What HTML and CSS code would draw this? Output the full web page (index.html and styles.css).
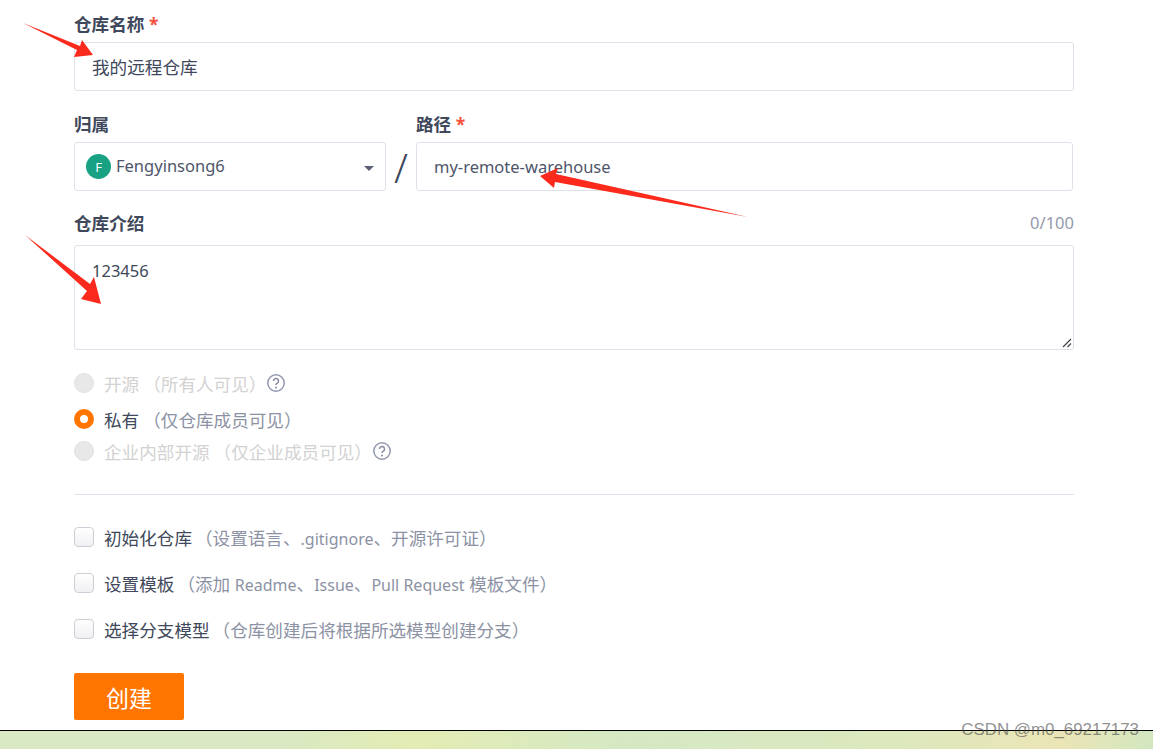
FILE: index.html
```html
<!DOCTYPE html>
<html lang="zh-CN">
<head>
    <meta charset="UTF-8">
    <title>新建仓库</title>
    <link rel="stylesheet" href="styles.css">
</head>
<body>
    <form class="form">
        <div class="field field-name">
            <label class="label">仓库名称 <span class="req">*</span></label>
            <div class="input">我的远程仓库</div>
        </div>

        <div class="owner-row">
            <div class="owner">
                <label class="label">归属</label>
                <div class="input select">
                    <span class="avatar">F</span>
                    <span class="owner-name en">Fengyinsong6</span>
                    <span class="caret"></span>
                </div>
            </div>
            <div class="slash">/</div>
            <div class="path">
                <label class="label">路径 <span class="req">*</span></label>
                <div class="input en">my-remote-warehouse</div>
            </div>
        </div>

        <div class="field field-desc">
            <div class="label-row">
                <label class="label">仓库介绍</label>
                <span class="count en">0/100</span>
            </div>
            <div class="textarea en">
                123456
                <svg class="grip" width="10" height="10" viewBox="0 0 10 10">
                    <path d="M1 9L9 1M5.500 9L9 5.500" stroke="#444" stroke-width="1.200" fill="none"/>
                </svg>
            </div>
        </div>

        <div class="radios">
            <div class="radio-row disabled row-open">
                <span class="radio"></span>
                <span class="opt">开源</span>
                <span class="hint">（所有人可见）</span>
                <svg class="help" width="20" height="20" viewBox="0 0 20 20">
                    <circle cx="10" cy="10" r="8.200" fill="none" stroke="#9499b0" stroke-width="1.500"/>
                    <path d="M7.500 8a2.500 2.500 0 1 1 3.800 2.100c-.9.5-1.300 1-1.300 1.900" fill="none" stroke="#868ba3" stroke-width="1.500"/>
                    <circle cx="10" cy="14.500" r="1" fill="#868ba3"/>
                </svg>
            </div>
            <div class="radio-row row-private">
                <span class="radio checked"></span>
                <span class="opt">私有</span>
                <span class="hint">（仅仓库成员可见）</span>
            </div>
            <div class="radio-row disabled row-internal">
                <span class="radio"></span>
                <span class="opt">企业内部开源</span>
                <span class="hint">（仅企业成员可见）</span>
                <svg class="help" width="20" height="20" viewBox="0 0 20 20">
                    <circle cx="10" cy="10" r="8.200" fill="none" stroke="#9499b0" stroke-width="1.500"/>
                    <path d="M7.500 8a2.500 2.500 0 1 1 3.800 2.100c-.9.5-1.300 1-1.300 1.900" fill="none" stroke="#868ba3" stroke-width="1.500"/>
                    <circle cx="10" cy="14.500" r="1" fill="#868ba3"/>
                </svg>
            </div>
        </div>

        <div class="divider"></div>

        <div class="checks">
            <div class="check-row">
                <span class="checkbox"></span>
                <span class="opt">初始化仓库</span>
                <span class="hint">（设置语言、<span class="en">.gitignore</span>、开源许可证）</span>
            </div>
            <div class="check-row">
                <span class="checkbox"></span>
                <span class="opt">设置模板</span>
                <span class="hint">（添加 <span class="en">Readme</span>、<span class="en">Issue</span>、<span class="en">Pull Request</span> 模板文件）</span>
            </div>
            <div class="check-row">
                <span class="checkbox"></span>
                <span class="opt">选择分支模型</span>
                <span class="hint">（仓库创建后将根据所选模型创建分支）</span>
            </div>
        </div>

        <div class="submit">创建</div>
    </form>

    <div class="strip"></div>
    <div class="watermark">CSDN @m0_69217173</div>

    <!-- red arrows drawn over the screenshot -->
    <svg class="arrows" width="1153" height="749" viewBox="0 0 1153 749">
        <polygon points="23,23 80,46 82,40 93,55 74,57 77,50" fill="#fb2a1c"/>
        <polygon points="748,217 556,174 558,168 540,176 554,188 555,182" fill="#fb2a1c"/>
        <polygon points="25,235 90,284 94,277 101,304 81,299 87,291" fill="#fb2a1c"/>
    </svg>
</body>
</html>
```

FILE: styles.css
```css
* {
    box-sizing: border-box;
}
html, body {
    margin: 0;
    height: 749px;
    overflow: hidden;
    background: #fff;
}
body {
    position: relative;
    font-family: "Noto Sans", "Noto Sans CJK SC", sans-serif;
    font-size: 17.6px;
    color: #40485b;
}
.en {
    font-size: 16.5px;
}
.form {
    width: 1000px;
    height: 730px;
    margin-left: 74px;
    padding-top: 13px;
}
.label {
    display: block;
    height: 24px;
    line-height: 22px;
    font-size: 17.6px;
    font-weight: 700;
    color: #40485b;
}
.req {
    color: #f4513f;
}
.field-name {
    height: 99px;
}
.field-name .label {
    height: 29px;
}
.input {
    display: flex;
    align-items: center;
    height: 49px;
    padding: 0 17px;
    border: 1px solid #dfe1ea;
    border-radius: 3px;
    color: #40485b;
    background: #fff;
}
.input.en {
    color: #4e556a;
}
.owner-row {
    display: flex;
    height: 100px;
    padding-top: 1px;
}
.owner {
    width: 312px;
}
.owner-row .label {
    height: 29px;
}
.select {
    padding: 0 11px 0 11px;
}
.avatar {
    display: flex;
    align-items: center;
    justify-content: center;
    width: 25px;
    height: 25px;
    border-radius: 50%;
    background: #19a184;
    color: #fff;
    font-size: 13px;
    flex-shrink: 0;
}
.owner-name {
    flex: 1;
    margin-left: 5px;
    margin-top: -3px;
    color: #4e556a;
}
.caret {
    width: 0;
    height: 0;
    margin-top: 3px;
    border-left: 5px solid transparent;
    border-right: 5px solid transparent;
    border-top: 5px solid #5a6073;
}
.slash {
    width: 30px;
    padding-top: 28px;
    text-align: center;
    font-size: 40px;
    line-height: 54px;
    font-weight: 300;
    color: #40485b;
}
.path {
    width: 657px;
}
.field-desc {
    height: 158px;
}
.label-row {
    display: flex;
    justify-content: space-between;
    height: 33px;
}
.count {
    line-height: 22px;
    color: #9499ab;
}
.textarea {
    position: relative;
    height: 105px;
    padding: 13px 17px;
    border: 1px solid #dfe1ea;
    border-radius: 3px;
    line-height: 24px;
}
.grip {
    position: absolute;
    right: 1px;
    bottom: 1px;
}
.radio-row, .check-row {
    display: flex;
    align-items: center;
}
.radios {
    height: 124px;
}
.row-open {
    height: 26px;
    margin-bottom: 10px;
}
.row-private {
    height: 26px;
    margin-bottom: 6px;
}
.row-internal {
    height: 26px;
}
.radio {
    width: 20px;
    height: 20px;
    margin-right: 10px;
    border-radius: 50%;
    background: #e8e8e8;
    border: 1px solid #e0e0e0;
}
.radio.checked {
    background: #fff;
    border: 6px solid #ff7500;
}
.opt {
    color: #40485b;
}
.hint {
    margin-left: 4px;
    color: #8c92a4;
}
.check-row .hint {
    margin-left: 3px;
}
.check-row .hint .en {
    font-size: 16px;
}
.disabled .opt, .disabled .hint {
    color: #d2d2d2;
}
.divider {
    height: 1px;
    background: #dfe3ec;
    margin-bottom: 29px;
}
.check-row {
    height: 26px;
    margin-bottom: 20px;
}
.checkbox {
    width: 20px;
    height: 20px;
    margin-right: 10px;
    border: 1px solid #ccced6;
    border-radius: 4px;
    background: linear-gradient(#fff, #f0f0f3);
}
.submit {
    display: flex;
    align-items: center;
    justify-content: center;
    width: 110px;
    height: 47px;
    margin-top: 31px;
    border-radius: 2px;
    background: #ff7500;
    color: #fff;
    font-size: 23px;
}
.strip {
    height: 19px;
    border-top: 1px solid #000;
    background: linear-gradient(90deg, #d9e9c3 0%, #dae9c2 25%, #e3ecb4 36%, #d5e8c4 55%, #dde8bd 78%, #ebe5b6 92%, #d2e7bf 100%);
}
.watermark {
    position: absolute;
    right: 14px;
    top: 721px;
    font-family: "Liberation Sans", sans-serif;
    font-size: 16.9px;
    line-height: 18px;
    color: rgba(70, 70, 70, 0.6);
}
.arrows {
    position: absolute;
    left: 0;
    top: 0;
    pointer-events: none;
}
```
